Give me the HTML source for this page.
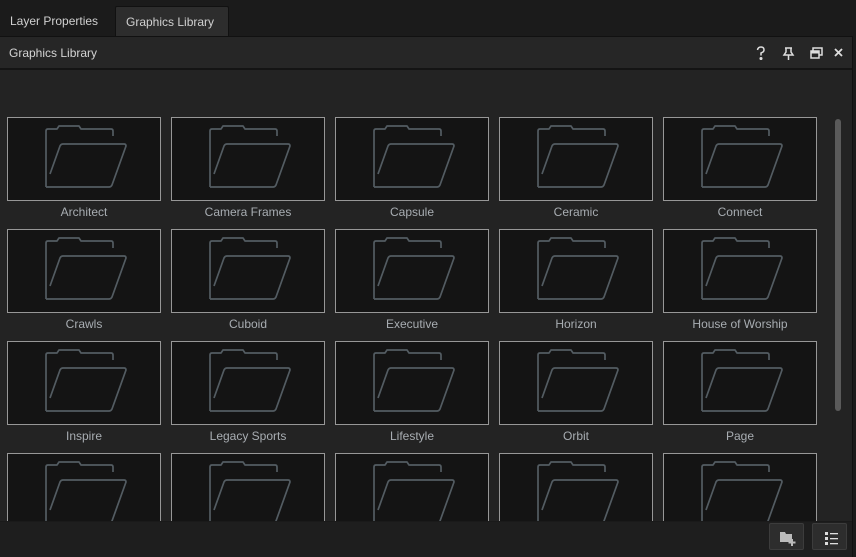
<!DOCTYPE html>
<html><head><meta charset="utf-8"><style>
*{margin:0;padding:0;box-sizing:border-box}
body{width:856px;height:557px;background:#1b1b1b;font-family:"Liberation Sans",sans-serif;position:relative;overflow:hidden;color:#ccc}
.tab{position:absolute;top:0;height:36px;line-height:42px;font-size:12px;color:#d0d0d0;padding:0 10px}
.panel{position:absolute;left:0;top:36px;width:853px;height:521px;background:#232323;border-top:1px solid #111;border-right:1px solid #111}
.hdr{position:absolute;left:0;top:0;width:100%;height:33px;background:#262626;border-bottom:2px solid #141414;font-size:12px;line-height:33px;padding-left:9px;color:#d4d4d4}
.card{position:absolute;width:154px;height:84px;background:#141414;border:1px solid #979797}
.lbl{position:absolute;width:154px;text-align:center;font-size:12px;color:#a8adb2}
.btn{position:absolute;top:1px;width:35px;height:27px;background:#2d2d2d;border:1px solid #3c3c3c;border-radius:2px}
</style></head><body>
<div class="tab" style="left:0">Layer Properties</div>
<div class="tab" style="left:115px;width:114px;background:#2d2d2d;border:1px solid #111;border-bottom:none;border-radius:2px 2px 0 0;top:6px;height:31px;line-height:30px">Graphics Library</div>
<div class="panel">
<div class="hdr">Graphics Library
<svg style="position:absolute;left:755px;top:9px" width="90" height="16" viewBox="0 0 90 16" fill="none" stroke="#ddd" stroke-width="1.5">
<path d="M2.5 4 Q3 1 6 1 Q9 1 9 4 Q9 6 6 7 L6 9.5"/><circle cx="6" cy="12.5" r=".8" fill="#ddd"/>
<path d="M30 2 H37 M31 2 V6 L29 9 H38 L36 6 V2 M33.5 9 V14"/>
<rect x="56" y="5" width="8" height="7"/><path d="M58 5 V2 H67 V9 H64"/><path d="M56 6.5 H64" stroke-width="2"/>
<path d="M80 3 L87 10 M87 3 L80 10" stroke-width="1.8"/>
</svg></div>
<div style="position:absolute;left:835px;top:82px;width:6px;height:292px;background:#5a5a5a;border-radius:3px"></div>
</div>
<div id="g"></div>
<script>
var names=["Architect","Camera Frames","Capsule","Ceramic","Connect","Crawls","Cuboid","Executive","Horizon","House of Worship","Inspire","Legacy Sports","Lifestyle","Orbit","Page","","","","",""];
var h="",svg='<svg width="154" height="84" viewBox="0 0 154 84" fill="none" stroke="#535c62" stroke-width="1.7" stroke-linejoin="round"><path d="M38 69 V13 Q38 11 40 11 H49 L51 8 H71 L73 11 H103 Q105 11 105 13 V18"/><path d="M38 69 H101 Q103 69 104 67 L118 28 Q118 26 116 26 H55 Q53 26 52 28 L42 56"/></svg>';
for(var i=0;i<20;i++){var r=Math.floor(i/5),c=i%5,x=7+c*164,y=117+r*112;
h+='<div class="card" style="left:'+x+'px;top:'+y+'px">'+svg+'</div>';
if(names[i])h+='<div class="lbl" style="left:'+x+'px;top:'+(y+88)+'px">'+names[i]+'</div>';}
document.getElementById("g").innerHTML=h;
</script>
<div style="position:absolute;left:0;top:521px;width:852px;height:36px;background:#1e1e1e;border-top:1px solid #1a1a1a">
<div class="btn" style="left:769px"><svg width="35" height="27" viewBox="0 0 35 27"><path d="M10 8 H15 L16 10 H22 V18 H10 Z" fill="#bbb"/><path d="M22 15 V22 M18.5 18.5 H25.5" stroke="#bbb" stroke-width="2"/></svg></div>
<div class="btn" style="left:812px"><svg width="35" height="27" viewBox="0 0 35 27" fill="#ddd"><rect x="12" y="8" width="3" height="3"/><rect x="12" y="13" width="3" height="3"/><rect x="12" y="18" width="3" height="3"/><rect x="17" y="9" width="8" height="1.3"/><rect x="17" y="14" width="8" height="1.3"/><rect x="17" y="19" width="8" height="1.3"/></svg></div>
</div>
</body></html>
